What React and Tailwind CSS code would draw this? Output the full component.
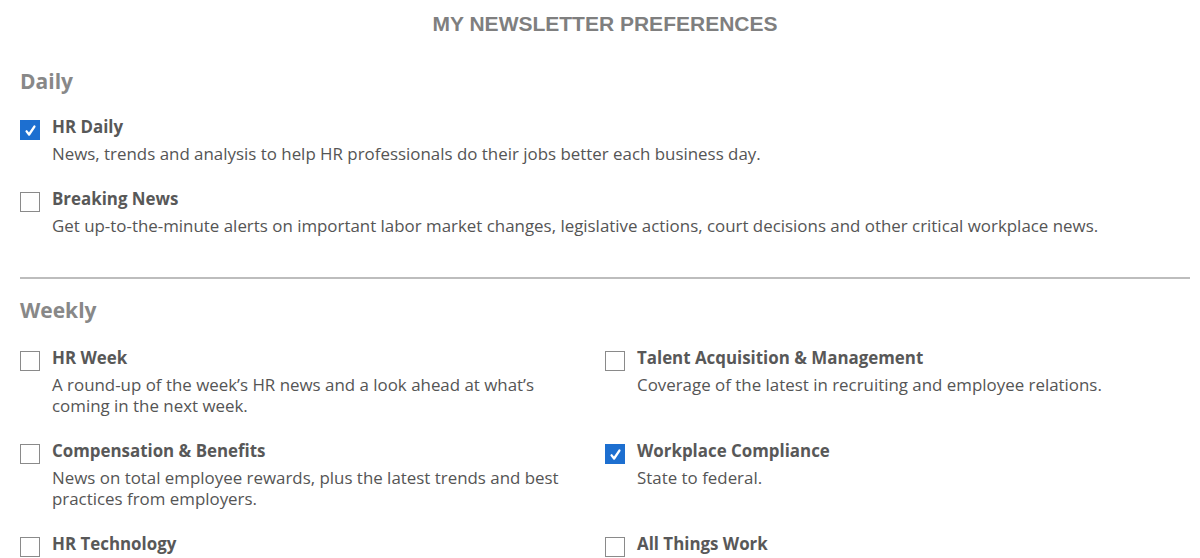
import { useState } from 'react';

const daily = [
  {
    id: 'hr-daily',
    title: 'HR Daily',
    desc: 'News, trends and analysis to help HR professionals do their jobs better each business day.',
    checked: true,
  },
  {
    id: 'breaking',
    title: 'Breaking News',
    desc: 'Get up-to-the-minute alerts on important labor market changes, legislative actions, court decisions and other critical workplace news.',
    checked: false,
  },
];

const weekly = [
  {
    id: 'hr-week',
    title: 'HR Week',
    desc: 'A round-up of the week’s HR news and a look ahead at what’s coming in the next week.',
    checked: false,
  },
  {
    id: 'talent',
    title: 'Talent Acquisition & Management',
    desc: 'Coverage of the latest in recruiting and employee relations.',
    checked: false,
  },
  {
    id: 'comp',
    title: 'Compensation & Benefits',
    desc: 'News on total employee rewards, plus the latest trends and best practices from employers.',
    checked: false,
  },
  {
    id: 'compliance',
    title: 'Workplace Compliance',
    desc: 'State to federal.',
    checked: true,
  },
  { id: 'tech', title: 'HR Technology', desc: '', checked: false },
  { id: 'work', title: 'All Things Work', desc: '', checked: false },
];

function Box({ checked, onClick }) {
  return (
    <button
      type="button"
      onClick={onClick}
      className={
        checked
          ? 'mt-[5px] flex h-[20px] w-[20px] shrink-0 items-center justify-center bg-[#1d6fd0]'
          : 'mt-[5px] h-[20px] w-[20px] shrink-0 border border-[#8a8a8a] bg-white'
      }
    >
      {checked && (
        <svg width="13" height="13" viewBox="0 0 12 12">
          <path d="M2.4 6.8 L4.7 9.7 L9.6 2.4" fill="none" stroke="white" strokeWidth="2.2" strokeLinecap="round" strokeLinejoin="round" />
        </svg>
      )}
    </button>
  );
}

function Item({ item, checked, toggle, narrow }) {
  return (
    <div className="flex gap-[12px]">
      <Box checked={checked} onClick={toggle} />
      <div className={narrow ? 'pr-[30px]' : ''}>
        <div className="text-[16.9px] font-bold leading-[24px] text-[#585858]">{item.title}</div>
        {item.desc && (
          <div className="mt-[4px] text-[16.9px] leading-[21px] text-[#555]">{item.desc}</div>
        )}
      </div>
    </div>
  );
}

export default function App() {
  const [sel, setSel] = useState(() => {
    const s = {};
    [...daily, ...weekly].forEach((i) => (s[i.id] = i.checked));
    return s;
  });
  const toggle = (id) => setSel((s) => ({ ...s, [id]: !s[id] }));

  return (
    <div className="h-[558px] overflow-hidden bg-white">
      <div className="w-[1170px] ml-[20px] pt-[12px] font-['Open_Sans',sans-serif]">
        <h1 className="text-center font-['Liberation_Sans',Arial,sans-serif] text-[21px] font-bold leading-[24px] text-[#7f7f7f]">
          MY NEWSLETTER PREFERENCES
        </h1>

        <h2 className="mt-[31px] text-[21px] font-bold leading-[28px] text-[#888]">Daily</h2>
        <div className="mt-[20px] flex flex-col gap-[23px]">
          {daily.map((item) => (
            <Item key={item.id} item={item} checked={sel[item.id]} toggle={() => toggle(item.id)} />
          ))}
        </div>

        <div className="mt-[41px] h-[2px] bg-[#bdbdbd]" />

        <h2 className="mt-[17px] text-[21px] font-bold leading-[28px] text-[#888]">Weekly</h2>
        <div className="mt-[22px] grid grid-cols-2 gap-y-[23px]">
          {weekly.map((item, i) => (
            <Item
              key={item.id}
              item={item}
              narrow={i % 2 === 0}
              checked={sel[item.id]}
              toggle={() => toggle(item.id)}
            />
          ))}
        </div>
      </div>
    </div>
  );
}
